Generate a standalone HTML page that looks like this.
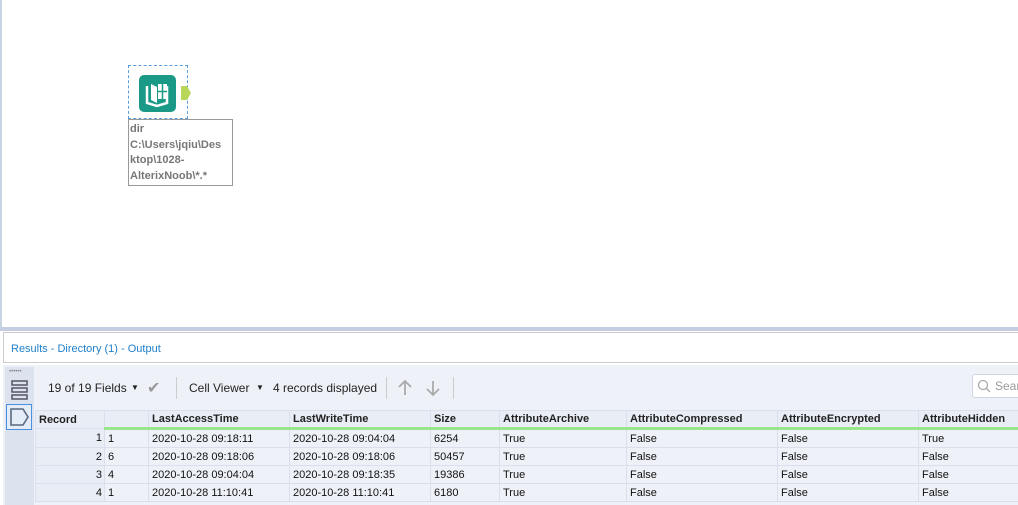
<!DOCTYPE html><html><head><style>
body{margin:0;width:1018px;height:505px;overflow:hidden;background:#fff;font-family:"Liberation Sans",Tahoma,sans-serif;position:relative}
.a{position:absolute}
table{border-collapse:collapse;position:absolute;left:35px;top:410px;font-size:11px;table-layout:fixed;width:983px}
td,th{height:17px;padding:0 0 0 3px;border:1px solid #d9e0ec;white-space:nowrap;overflow:hidden;text-align:left;color:#111}
th{background:#e9edf5;font-weight:bold;border-bottom:3px solid #99e68a;height:15px;color:#222}
th.r{border-bottom:1px solid #d9e0ec;height:17px}
td.rec{background:#e9edf5;text-align:right;padding-right:2px}
</style></head><body>
<div class="a" style="left:0;top:0;width:2px;height:328px;background:#c9d3e6"></div>
<div class="a" style="left:128px;top:65px;width:60px;height:54px;border:1px dashed #5b9be0;box-sizing:border-box"></div>
<div class="a" style="left:139px;top:75px;width:37px;height:37px;background:#1a9a86;border-radius:5px"></div>
<svg class="a" style="left:139px;top:75px" width="37" height="37" viewBox="0 0 37 37"><path d="M8 11v17l10 3 10-3V11" fill="none" stroke="#fff" stroke-width="2.5"/><path d="M12 9v16l6 3V12z" fill="#fff"/><rect x="19" y="9" width="9" height="15" fill="#fff"/><path d="M23.5 9v15M19 16.5h9" stroke="#1a9a86" stroke-width="1.5"/></svg>
<svg class="a" style="left:181px;top:86px" width="10" height="15"><path d="M0 0h6l4 7-4 7H0z" fill="#b8d65a"/></svg>
<div class="a" style="left:128px;top:119px;width:105px;height:67px;border:1px solid #999;box-sizing:border-box;background:#fff;font-size:11px;font-weight:bold;color:#777;line-height:15.5px;padding:2px 0 0 1px">dir<br>C:\Users\jqiu\Des<br>ktop\1028-<br>AlterixNoob\*.*</div>
<div class="a" style="left:0;top:327px;width:1018px;height:4px;background:#c5cee0"></div>
<div class="a" style="left:3px;top:332px;width:1015px;height:31px;border:1px solid #ccc;border-right:none;box-sizing:border-box;background:#fff;font-size:11px;color:#1f7fc9;padding:10px 0 0 7px">Results - Directory (1) - Output</div>
<div class="a" style="left:3px;top:365px;width:1015px;height:140px;background:#eef2f8"></div>
<div class="a" style="left:5px;top:367px;width:29px;height:138px;background:#dde3ee"></div>
<div class="a" style="left:9px;top:369px;font-size:6px;color:#888">••••••</div>
<svg class="a" style="left:11px;top:380px" width="18" height="20"><g fill="none" stroke="#556" stroke-width="1.5"><rect x="1" y="1" width="15" height="4"/><rect x="1" y="8" width="15" height="4"/><rect x="1" y="15" width="15" height="4"/></g></svg>
<div class="a" style="left:6px;top:404px;width:26px;height:26px;border:1px solid #4a90e2;box-sizing:border-box;background:#e4ecf8"></div>
<svg class="a" style="left:10px;top:408px" width="20" height="18"><path d="M1 1h12l5 8-5 8H1z" fill="none" stroke="#5a6a80" stroke-width="1.6"/></svg>
<div class="a" style="left:48px;top:381px;font-size:12px;color:#222">19 of 19 Fields</div>
<div class="a" style="left:131px;top:383px;font-size:8px;color:#222">▼</div>
<div class="a" style="left:147px;top:378px;font-size:16px;color:#999">✔</div>
<div class="a" style="left:176px;top:377px;width:1px;height:22px;background:#ccc"></div>
<div class="a" style="left:189px;top:381px;font-size:12px;color:#222">Cell Viewer</div>
<div class="a" style="left:256px;top:383px;font-size:8px;color:#222">▼</div>
<div class="a" style="left:273px;top:381px;font-size:12px;color:#222">4 records displayed</div>
<div class="a" style="left:386px;top:377px;width:1px;height:22px;background:#ccc"></div>
<svg class="a" style="left:396px;top:379px" width="50" height="18"><g fill="none" stroke="#aaa" stroke-width="1.8"><path d="M9 16V2M3 8l6-6 6 6M37 2v14M31 10l6 6 6-6"/></g></svg>
<div class="a" style="left:453px;top:377px;width:1px;height:22px;background:#ccc"></div>
<div class="a" style="left:972px;top:374px;width:60px;height:24px;border:1px solid #cfd6e2;border-radius:3px;background:#fff;box-sizing:border-box;font-size:12px;color:#999;padding:4px 0 0 22px">Search</div>
<svg class="a" style="left:977px;top:379px" width="14" height="14"><circle cx="6" cy="6" r="4.5" fill="none" stroke="#aaa" stroke-width="1.3"/><path d="M9 9l4 4" stroke="#aaa" stroke-width="1.3"/></svg>
<table>
<colgroup><col style="width:69px"><col style="width:44px"><col style="width:141px"><col style="width:141px"><col style="width:69px"><col style="width:127px"><col style="width:151px"><col style="width:141px"><col style="width:100px"></colgroup>
<tr><th class="r">Record</th><th></th><th>LastAccessTime</th><th>LastWriteTime</th><th>Size</th><th>AttributeArchive</th><th>AttributeCompressed</th><th>AttributeEncrypted</th><th>AttributeHidden</th></tr>
<tr><td class="rec">1</td><td>1</td><td>2020-10-28 09:18:11</td><td>2020-10-28 09:04:04</td><td>6254</td><td>True</td><td>False</td><td>False</td><td>True</td></tr>
<tr><td class="rec">2</td><td>6</td><td>2020-10-28 09:18:06</td><td>2020-10-28 09:18:06</td><td>50457</td><td>True</td><td>False</td><td>False</td><td>False</td></tr>
<tr><td class="rec">3</td><td>4</td><td>2020-10-28 09:04:04</td><td>2020-10-28 09:18:35</td><td>19386</td><td>True</td><td>False</td><td>False</td><td>False</td></tr>
<tr><td class="rec">4</td><td>1</td><td>2020-10-28 11:10:41</td><td>2020-10-28 11:10:41</td><td>6180</td><td>True</td><td>False</td><td>False</td><td>False</td></tr>
</table>
</body></html>
